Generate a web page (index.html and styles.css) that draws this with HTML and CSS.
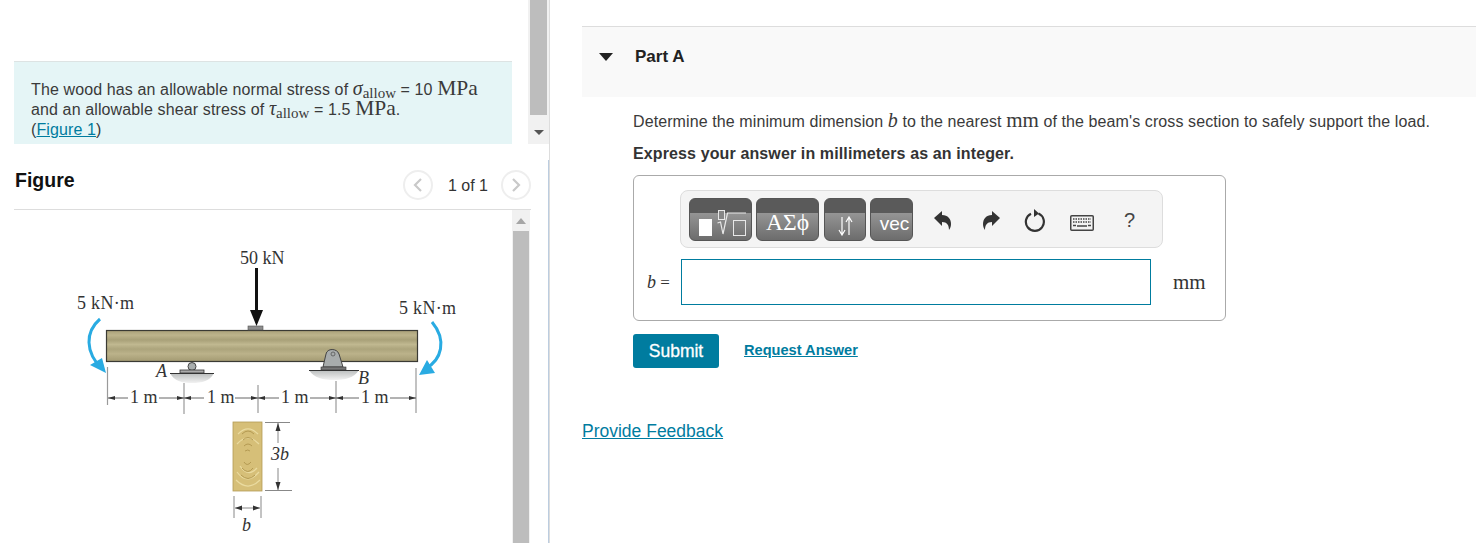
FILE: index.html
```html
<!DOCTYPE html>
<html lang="en">
<head>
<meta charset="utf-8">
<title>Part A</title>
<link rel="stylesheet" href="styles.css">
</head>
<body>
<div class="app">
  <aside class="left">
    <div class="top">
      <div class="top-main">
        <div class="intro">
          The wood has an allowable normal stress of <span class="math"><i class="greek">σ</i><span class="sub">allow</span></span> = 10 <span class="math big">MPa</span><br>
          and an allowable shear stress of <span class="math"><i class="greek">τ</i><span class="sub">allow</span></span> = 1.5 <span class="math big">MPa</span>.<br>
          (<a href="#" class="link">Figure 1</a>)
        </div>
      </div>
      <div class="vbar vbar-top">
        <div class="thumb thumb-top"></div>
        <div class="arrow-box"><span class="tri-down"></span></div>
      </div>
    </div>
    <div class="figure-head">
      <h2 class="figure-title">Figure</h2>
      <div class="pager">
        <span class="circle"><svg width="10" height="16" viewBox="0 0 10 16"><path d="M8 2 2 8l6 6" class="chev"/></svg></span>
        <span class="pager-text">1 of 1</span>
        <span class="circle"><svg width="10" height="16" viewBox="0 0 10 16"><path d="m2 2 6 6-6 6" class="chev"/></svg></span>
      </div>
    </div>
    <div class="figure-body">
      <svg class="diagram" width="498" height="333" viewBox="14 210 498 333">
        <defs>
          <linearGradient id="wood" x1="0" y1="0" x2="0" y2="1">
            <stop offset="0" stop-color="#a9a078"/><stop offset=".15" stop-color="#bdb48c"/>
            <stop offset=".3" stop-color="#a8a078"/><stop offset=".45" stop-color="#c0b890"/>
            <stop offset=".6" stop-color="#aca47c"/><stop offset=".75" stop-color="#bbb28a"/>
            <stop offset="1" stop-color="#a39a72"/>
          </linearGradient>
          <linearGradient id="shade" x1="0" y1="0" x2="0" y2="1">
            <stop offset="0" stop-color="#b9bcbc"/><stop offset="1" stop-color="#f2f2f2"/>
          </linearGradient>
        </defs>
        <g class="soft">
          <rect x="106.500" y="330.500" width="311" height="31" fill="url(#wood)" stroke="#3a3a34" stroke-width="1.200"/>
          <rect x="248" y="326" width="15" height="4" fill="#8d8d8d" stroke="#555" stroke-width=".6"/>
          <path d="M255 268h3v42h-3z" fill="#111"/>
          <path d="M250 310h13l-6.500 16z" fill="#111"/>

          <path d="M100 319C85 332 85 352 102 369" class="moment"/>
          <path d="M90 365l16 8-4-15z" fill="#29abe2"/>
          <path d="M432 322C447 340 442 360 425 369" class="moment"/>
          <path d="M419 375l16-2-8-13z" fill="#29abe2"/>

          <path d="M170 373h44c-4 8-12 10-22 10s-18-2-22-10z" fill="url(#shade)"/>
          <circle cx="192" cy="366.500" r="4" fill="#a9aeae" stroke="#444"/>
          <rect x="180" y="370" width="24" height="3" fill="#aaa" stroke="#333" stroke-width=".8"/>
          <path d="M170 373.500h44" class="dark"/>

          <path d="M309 370h50c-5 8-14 10-25 10s-20-2-25-10z" fill="url(#shade)"/>
          <path d="M323 367l3-13c1-6 11-6 13 0l4 13z" fill="#a8acac" stroke="#444"/>
          <circle cx="333" cy="354" r="2" fill="none" stroke="#555" stroke-width=".8"/>
          <rect x="321" y="367" width="25" height="3" fill="#777" stroke="#333" stroke-width=".6"/>
          <path d="M309 370.500h50" class="dark"/>

          <path d="M107.500 367v38M184 383v31M258 385v28M336 381v32M416 368v45" class="tick"/>
          <path d="M108 398h20M159 398h25M184 398h20M235 398h23M258 398h21M310 398h26M336 398h23M390 398h26" class="dim"/>
          <path d="M108 398l7-2v4zM184 398l-7-2v4zM184 398l7-2v4zM258 398l-7-2v4zM258 398l7-2v4zM336 398l-7-2v4zM336 398l7-2v4zM416 398l-7-2v4z" fill="#333"/>

          <rect x="233" y="422" width="29" height="69" fill="#d6bf78"/>
          <g fill="none" stroke="#eadba0" stroke-width="1.200">
            <path d="M238 434q10-10 20 0M237 444q11-12 22 0M240 466q8 12 17 2M237 472q10 14 22 0M236 480q12 12 24 0"/>
          </g>
          <g fill="none" stroke="#b49a52" stroke-width="1">
            <path d="M242 434q6-6 12 0M243 440q5-5 10 0M244 446q4-4 8 0M245 451q3-2 5 0M244 462q3 5 7 0M242 468q6 7 11 0M241 475q7 7 14 0"/>
          </g>
          <rect x="233" y="422" width="29" height="69" fill="none" stroke="#b39c56" stroke-width=".8"/>
          <path d="M265 422.500h25M265 490.500h27M278 423v20M278 468v22M234 496v22M261 496v22M235 508h25" class="tick thin"/>
          <path d="M278 423l-2.500 8h5zM278 490l-2.500-8h5zM235 508l7-2.500v5zM260 508l-7-2.500v5z" fill="#333"/>
        </g>
        <g class="labels">
          <text x="77" y="309" class="wide">5 kN·m</text>
          <text x="399" y="314" class="wide">5 kN·m</text>
          <text x="240" y="264">50 kN</text>
          <text x="156" y="377" class="it">A</text>
          <text x="358" y="384" class="it">B</text>
          <text x="130" y="403">1 m</text>
          <text x="207" y="403">1 m</text>
          <text x="281" y="403">1 m</text>
          <text x="361" y="403">1 m</text>
          <text x="271" y="460" class="it">3b</text>
          <text x="242" y="531" class="it">b</text>
        </g>
      </svg>
      <div class="vbar vbar-fig">
        <div class="arrow-box small"><span class="tri-up"></span></div>
        <div class="thumb thumb-fig"></div>
      </div>
    </div>
  </aside>

  <main class="right">
    <div class="part-head">
      <span class="part-tri"></span>
      <h3 class="part-title">Part A</h3>
    </div>
    <div class="part-body">
      <p class="question">Determine the minimum dimension <i class="math mb">b</i> to the nearest <span class="math mm">mm</span> of the beam's cross section to safely support the load.</p>
      <p class="instruction">Express your answer in millimeters as an integer.</p>
      <div class="answer">
        <div class="toolbar">
          <span class="tbtn w63">
            <svg class="templ" width="51" height="28" viewBox="0 0 51 28">
              <rect x="4" y="11" width="13" height="17" fill="#fff"/>
              <path d="M22.500 15l3-1 2.500 12 4.500-21H51" fill="none" stroke="#e8e8e8" stroke-width="1.200"/>
              <rect x="23.500" y="2.500" width="6" height="9" fill="#858585" stroke="#e8e8e8"/>
              <rect x="38.500" y="12.500" width="12" height="15" fill="none" stroke="#e8e8e8"/>
            </svg>
          </span>
          <span class="tbtn w63 serif">ΑΣϕ</span>
          <span class="tbtn w42">
            <svg class="templ" width="15" height="20" viewBox="0 0 15 20"><path d="M4 1v17M1 14l3 5 3-5M11 19V2M8 6l3-5 3 5" fill="none" stroke="#fff" stroke-width="1.200"/></svg>
          </span>
          <span class="tbtn w43">vec</span>
          <span class="tools">
            <svg width="18" height="20" viewBox="0 0 18 20"><path d="M0 8 8 1v4c6 0 9 4 9 9 0 2-.5 4-2 6 0-5-2-8-7-8v4z" class="ic"/></svg>
            <svg width="18" height="20" viewBox="0 0 18 20"><path d="M18 8 10 1v4C4 5 1 9 1 14c0 2 .5 4 2 6 0-5 2-8 7-8v4z" class="ic"/></svg>
            <svg width="22" height="24" viewBox="0 0 22 24"><path d="M14.500 5.600A9 9 0 1 1 7 5.700" fill="none" stroke="#333" stroke-width="2.200"/><path d="M10 1l5 4.500L10 9z" class="ic"/></svg>
            <svg width="24" height="16" viewBox="0 0 24 16"><rect x=".75" y=".75" width="22.500" height="14.500" rx="1" fill="#f4f4f4" stroke="#444" stroke-width="1.500"/><path d="M3 4h18M3 7h18" stroke="#444" stroke-width="1.500" stroke-dasharray="1.500 1"/><path d="M3 10.500h3M7 11h10M18 10.500h3" stroke="#444" stroke-width="1.500"/></svg>
            <span class="help">?</span>
          </span>
        </div>
        <div class="entry">
          <span class="eq"><i class="var">b</i> =</span>
          <span class="input"></span>
          <span class="unit">mm</span>
        </div>
      </div>
      <div class="actions">
        <button class="submit">Submit</button>
        <a href="#" class="req">Request Answer</a>
      </div>
    </div>
    <a href="#" class="feedback">Provide Feedback</a>
  </main>
</div>
</body>
</html>
```

FILE: styles.css
```css
* { box-sizing: border-box; }
html, body { margin: 0; height: 543px; overflow: hidden; background: #fff; }
body { font-family: "Liberation Sans", Arial, sans-serif; font-size: 16px; color: #333; }
.app { display: flex; height: 543px; }

.left { position: relative; width: 550px; flex: none; height: 543px; overflow: hidden; border-right: 1px solid #ddd; }
.left::after { content: ""; position: absolute; right: -1px; top: 160px; bottom: 0; width: 2px; background: #bccde0; }
.top { display: flex; height: 144px; }
.top-main { width: 528px; padding: 61px 16px 0 14px; }
.intro { height: 83px; background: #e5f5f6; border-top: 1px solid #dde3e3; padding: 18px 0 0 17px; line-height: 20px; letter-spacing: .12px; white-space: nowrap; color: #3a3a3a; }
.math { font-family: "Liberation Serif", serif; line-height: 0; letter-spacing: 0; }
.greek { font-size: 20px; line-height: 0; }
.sub { font-size: 15px; position: relative; top: 3px; line-height: 0; }
.big { font-size: 21.500px; }
.link { color: #007c9f; }

.vbar { display: flex; flex-direction: column; background: #f1f1f1; align-items: center; }
.vbar-top { width: 21px; }
.thumb { background: #bdbdbd; }
.thumb-top { width: 17px; height: 115px; }
.arrow-box { height: 29px; display: flex; align-items: center; justify-content: center; }
.arrow-box.small { height: 21px; }
.tri-down { border: 5px solid transparent; border-top: 5px solid #555; border-bottom: 0; margin-top: 5px; }
.tri-up { border: 5px solid transparent; border-bottom: 6px solid #a6a6a6; border-top: 0; }

.figure-head { display: flex; justify-content: space-between; margin: 0 18px 0 14px; height: 66px; padding-top: 23px; border-bottom: 1px solid #ddd; }
.figure-title { margin: 0 0 0 1px; font-size: 19.500px; line-height: 26px; font-weight: 700; color: #111; }
.pager { display: flex; align-items: flex-start; }
.circle { width: 30px; height: 30px; border: 2px solid #eee; border-radius: 50%; display: flex; align-items: center; justify-content: center; margin-top: 3px; }
.chev { fill: none; stroke: #c9c9c9; stroke-width: 2.200; }
.pager-text { margin: 9px 13px 0 15px; line-height: 20px; }

.figure-body { display: flex; height: 333px; padding-left: 14px; }
.diagram { display: block; flex: none; }
.soft { filter: blur(.45px); }
.moment { fill: none; stroke: #29abe2; stroke-width: 3; }
.dark { stroke: #333; stroke-width: 1; fill: none; }
.tick { stroke: #9a9a9a; stroke-width: 1.200; fill: none; }
.tick.thin { stroke: #888; stroke-width: 1; }
.dim { stroke: #666; stroke-width: 1; fill: none; }
.labels text { font-family: "Liberation Serif", serif; font-size: 18px; fill: #333; }
.labels .wide { letter-spacing: .3px; }
.labels .it { font-style: italic; }
.vbar-fig { width: 18px; }
.thumb-fig { width: 16px; flex: 1; }

.right { flex: 1; padding: 26px 0 0 32px; min-width: 0; }
.part-head { display: flex; height: 71px; background: #f9f9f9; border-top: 1px solid #ddd; padding: 19px 0 0 17px; }
.part-tri { width: 0; height: 0; border: 7px solid transparent; border-top: 8px solid #222; border-bottom: 0; margin: 7px 22px 0 0; }
.part-title { margin: 1px 0 0; font-size: 17px; line-height: 20px; color: #222; }
.part-body { padding-left: 51px; }
.question { margin: 15px 0 0; line-height: 20px; letter-spacing: .1px; white-space: nowrap; color: #3a3a3a; }
.mb { font-size: 20px; }
.mm { font-size: 21px; }
.instruction { margin: 12px 0 0; line-height: 20px; font-weight: 700; letter-spacing: .12px; color: #333; }

.answer { margin-top: 11px; width: 593px; height: 146px; border: 1px solid #aaa; border-radius: 6px; padding: 14px 0 0 46px; }
.toolbar { display: flex; align-items: center; gap: 4px; width: 483px; height: 58px; border: 1px solid #ddd; border-radius: 8px; background: #f4f4f4; padding: 0 0 0 8px; }
.tbtn { height: 43px; border-radius: 6px; color: #fff; display: flex; align-items: flex-end; justify-content: center; padding-bottom: 4px; border: 1px solid #555; background: linear-gradient(#5a5a5a 0, #5a5a5a 33%, #959595 34%, #6c6c6c 100%); }
.w63 { width: 63px; }
.w42 { width: 42px; margin-left: 1px; }
.w43 { width: 43px; font-size: 19px; line-height: 24px; padding-left: 6px; }
.serif { font-family: "Liberation Serif", serif; font-size: 23.500px; line-height: 26px; padding-bottom: 5px; }
.templ { display: block; flex: none; }
.tools { display: flex; align-items: center; margin-left: 18px; padding-top: 2px; }
.ic { fill: #333; }
.tools svg:nth-child(1) { margin-left: -1px; margin-right: 30px; }
.tools svg:nth-child(2) { margin-right: 24px; }
.tools svg:nth-child(3) { margin-right: 24px; }
.tools svg:nth-child(4) { margin-right: 30px; margin-top: 6px; }
.help { font-size: 20px; line-height: 20px; color: #444; }

.entry { display: flex; align-items: center; margin-top: 11px; height: 46px; }
.eq { width: 34px; margin-left: -33px; padding-top: 1px; white-space: nowrap; font-family: "Liberation Serif", serif; font-size: 17px; flex: none; }
.var { font-size: 18px; }
.input { width: 470px; height: 46px; border: 1px solid #007c9f; background: #fff; flex: none; }
.unit { margin-left: 22px; font-family: "Liberation Serif", serif; font-size: 21px; }

.actions { display: flex; align-items: center; margin-top: 13px; }
.submit { width: 86px; height: 34px; border: 0; border-radius: 3px; background: #007c9f; color: #fff; font: 400 17.500px "Liberation Sans", Arial, sans-serif; padding: 0; -webkit-text-stroke: .3px #fff; }
.req { margin: -2px 0 0 25px; font-size: 14.600px; font-weight: 700; color: #007c9f; }
.feedback { display: inline-block; margin-top: 52px; font-size: 17.500px; line-height: 22px; color: #007c9f; }
```
